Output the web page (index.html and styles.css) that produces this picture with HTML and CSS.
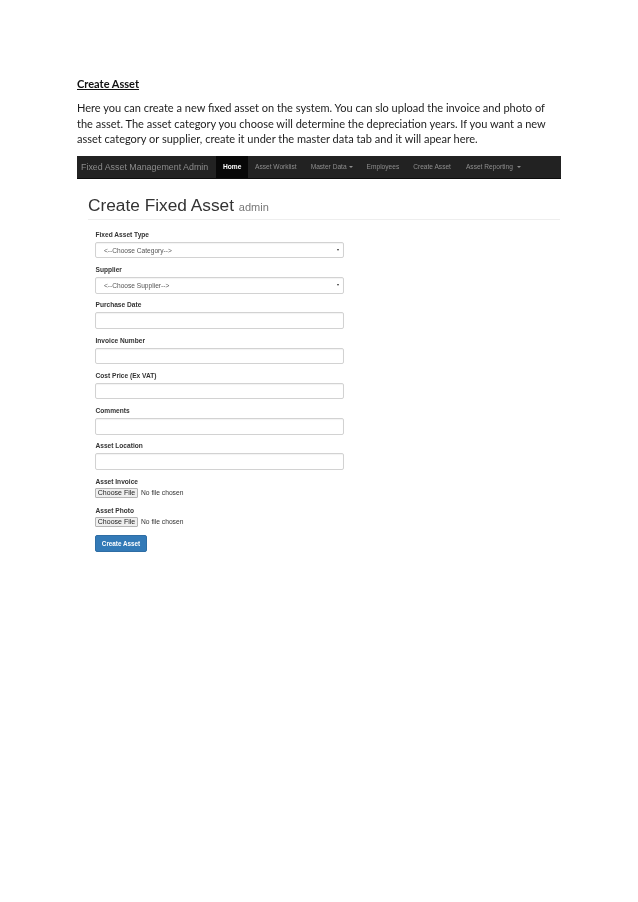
FILE: index.html
```html
<!DOCTYPE html>
<html lang="en">
<head>
<meta charset="utf-8">
<title>Create Asset</title>
<link rel="stylesheet" href="styles.css">
</head>
<body>
<main class="page">
  <h1 class="doc-title">Create Asset</h1>
  <p class="doc-text">Here you can create a new fixed asset on the system. You can slo upload the invoice and photo of the asset. The asset category you choose will determine the depreciation years. If you want a new asset category or supplier, create it under the master data tab and it will apear here.</p>
  <section class="shot">
    <nav class="navbar">
      <span class="brand">Fixed Asset Management Admin</span>
      <a class="nav-item active">Home</a>
      <a class="nav-item">Asset Worklist</a>
      <a class="nav-item">Master Data<i class="caret"></i></a>
      <a class="nav-item">Employees</a>
      <a class="nav-item">Create Asset</a>
      <a class="nav-item">Asset Reporting <i class="caret"></i></a>
    </nav>
    <div class="content">
      <h2 class="app-title">Create Fixed Asset <small>admin</small></h2>
      <form class="form">
        <div class="field"><label>Fixed Asset Type</label><div class="select"><span>&lt;--Choose Category--&gt;</span><i class="arrow"></i></div></div>
        <div class="field"><label>Supplier</label><div class="select"><span>&lt;--Choose Supplier--&gt;</span><i class="arrow"></i></div></div>
        <div class="field"><label>Purchase Date</label><input class="input" type="text"></div>
        <div class="field"><label>Invoice Number</label><input class="input" type="text"></div>
        <div class="field"><label>Cost Price (Ex VAT)</label><input class="input" type="text"></div>
        <div class="field"><label>Comments</label><input class="input" type="text"></div>
        <div class="field"><label>Asset Location</label><input class="input" type="text"></div>
        <div class="file-field"><label>Asset Invoice</label><div class="file"><span class="file-btn">Choose File</span><span>No file chosen</span></div></div>
        <div class="file-field"><label>Asset Photo</label><div class="file"><span class="file-btn">Choose File</span><span>No file chosen</span></div></div>
        <button class="submit" type="button">Create Asset</button>
      </form>
    </div>
  </section>
</main>
</body>
</html>
```
FILE: styles.css
```css
* { box-sizing: border-box; }
html, body { margin: 0; background: #fff; }
body { width: 638px; height: 902px; overflow: hidden; }
.page { padding: 77px 77px 0; filter: blur(0.4px); }
.doc-title {
  margin: 0 0 10px;
  font: 700 11px/13px Lato, sans-serif;
  color: #111;
  text-decoration: underline;
}
.doc-text {
  margin: 0 0 9px;
  width: 478px;
  font: 400 11.02px/15.6px Lato, sans-serif;
  color: #1c1c1c;
}
.shot { width: 484px; font-family: "Liberation Sans", Arial, sans-serif; }
.navbar {
  display: flex;
  align-items: stretch;
  height: 23px;
  background: #222;
  border-bottom: 1px solid #0c0c0c;
}
.brand { padding: 0 0 0 4px; font-size: 8.9px; line-height: 22px; color: #8c8c8c; white-space: nowrap; width: 139px; }
.nav-item { padding: 0 7px; font-size: 6.6px; line-height: 22px; color: #8e8e8e; white-space: nowrap; }
.nav-item.active { width: 32px; padding: 0 0 0 7px; background: #080808; color: #fff; font-weight: 700; }
.nav-item:last-child { padding-left: 8px; }
.caret {
  display: inline-block;
  width: 0; height: 0;
  margin-left: 2px;
  vertical-align: middle;
  border-top: 2px solid #8e8e8e;
  border-left: 2px solid transparent;
  border-right: 2px solid transparent;
}
.content { padding: 0 1px 0 11px; }
.app-title {
  margin: 16px 0 0;
  padding-bottom: 4px;
  height: 25px;
  font-size: 17.3px;
  line-height: 20px;
  font-weight: 400;
  color: #333;
  border-bottom: 1px solid #eee;
  white-space: nowrap;
}
.app-title small { font-size: 11px; color: #777; }
.form { display: flex; flex-direction: column; padding: 10px 0 0 7px; width: 256px; }
.field { display: flex; flex-direction: column; height: 35.25px; }
.field + .file-field { margin-top: 1px; }
.field label, .file-field label {
  height: 10px;
  margin-bottom: 2px;
  padding-left: 0.5px;
  font-size: 6.6px;
  line-height: 10px;
  font-weight: 700;
  color: #333;
}
.select, .input {
  width: 249px;
  height: 16.5px;
  background: #fff;
  border: 1px solid #d2d2d2;
  border-radius: 2px;
  box-shadow: inset 0 1px 1px rgba(0,0,0,.05);
  padding: 0;
  outline: 0;
}
.select {
  display: flex;
  align-items: center;
  justify-content: space-between;
  padding: 0 4px 0 8px;
  font-size: 6.6px;
  color: #555;
}
.arrow { width: 0; height: 0; border-top: 2px solid #333; border-left: 1.5px solid transparent; border-right: 1.5px solid transparent; }
.file-field { display: flex; flex-direction: column; height: 29px; }
.file-field label { height: 8px; margin-bottom: 2px; line-height: 8px; }
.file { display: flex; align-items: center; gap: 3px; font-size: 6.7px; color: #333; }
.file-btn {
  width: 43px;
  height: 10px;
  line-height: 8px;
  text-align: center;
  font-size: 7px;
  color: #222;
  background: #efefef;
  border: 1px solid #b4b4b4;
  border-radius: 1px;
}
.submit {
  align-self: flex-start;
  width: 52px;
  height: 17px;
  margin-top: -1px;
  padding: 0;
  font: 700 6.3px "Liberation Sans", Arial, sans-serif;
  color: #fff;
  background: #337ab7;
  border: 1px solid #2e6da4;
  border-radius: 2px;
}
```
